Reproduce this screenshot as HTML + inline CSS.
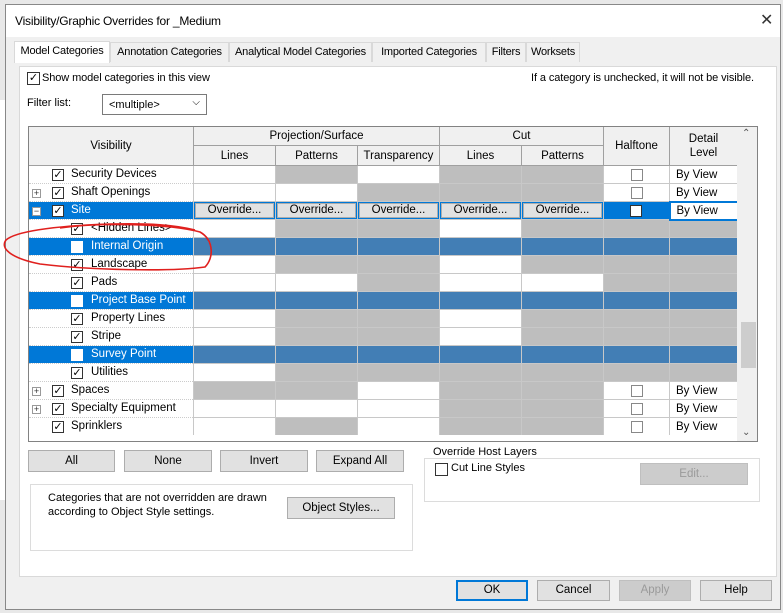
<!DOCTYPE html>
<html><head><meta charset="utf-8"><style>
*{box-sizing:border-box;margin:0;padding:0}
body{width:783px;height:613px;overflow:hidden;background:#e8e8e8;font-family:"Liberation Sans",sans-serif;font-size:11px;color:#000;position:relative}
.a{position:absolute;white-space:nowrap}
#dlg{left:5px;top:4px;width:776px;height:606px;background:#f0f0f0;border:1px solid #888}
#title{left:0;top:0;width:774px;height:32px;background:#fff}
.tab{position:absolute;top:42px;height:20px;border:1px solid #d9d9d9;border-bottom:none;background:#f0f0f0;text-align:center;line-height:19px;font-size:11px;white-space:nowrap;letter-spacing:-0.2px}
#panel{left:13px;top:61px;width:758px;height:511px;background:#fff;border:1px solid #d9d9d9}
table{border-collapse:collapse;table-layout:fixed;position:absolute;left:28px;top:126px;width:709px;font-size:11.5px}
td,th{height:18px;border:1px solid #c8c8c8;padding:0;font-weight:normal;white-space:nowrap;overflow:hidden}
th{background:#f0f0f0;border-color:#a0a0a0;text-align:center}
td.v{border-top:none;border-bottom:1px dotted #ccc;position:relative}
.h{background:repeating-conic-gradient(#8a8a8a 0 25%,#f2f2f2 0 50%) 0 0/2px 2px}
tr.b td{background:#0078d7;color:#fff}
tr.b td.h{background:repeating-conic-gradient(#1a5f9e 0 25%,#6a9ccc 0 50%) 0 0/2px 2px}
.cb{position:absolute;top:3px;width:12px;height:12px;border:1px solid #333;background:#fff;font-size:11px;line-height:10px;text-align:center;color:#000}
.lb{position:absolute;top:2px}
.ex{position:absolute;left:3px;top:5px;width:9px;height:9px;border:1px solid #999;background:#fff;font-size:9px;line-height:7px;text-align:center;color:#333}
.hc{display:block;margin:0 auto;width:12px;height:12px;border:1px solid #888;background:#fff}
.bv{padding-left:6px;padding-top:1px}
.ov{display:block;margin:0 1px;height:15px;background:#e1e1e1;border:1px solid #adadad;text-align:center;color:#000;line-height:13px}
.btn{position:absolute;background:#e1e1e1;border:1px solid #adadad;text-align:center;font-size:11.5px}
.dis{color:#9a9a9a;background:#cccccc;border-color:#bfbfbf}
.grp{position:absolute;border:1px solid #dcdcdc}
</style></head><body>
<div class="a" style="left:0;top:100px;width:5px;height:400px;background:#fff"></div>
<div id="dlg" class="a">
<div id="title" class="a"></div>
<div class="a" style="left:9px;top:9px;font-size:12px;letter-spacing:-0.2px">Visibility/Graphic Overrides for _Medium</div>
<div class="a" style="left:754px;top:5px;font-size:16px;color:#333;font-weight:lighter">✕</div>
<div id="panel" class="a"></div>
</div>
<div class="tab" style="left:14px;width:96px;background:#fff;top:41px;height:22px">Model Categories</div>
<div class="tab" style="left:110px;width:119px">Annotation Categories</div>
<div class="tab" style="left:229px;width:143px">Analytical Model Categories</div>
<div class="tab" style="left:372px;width:114px">Imported Categories</div>
<div class="tab" style="left:486px;width:40px">Filters</div>
<div class="tab" style="left:526px;width:54px">Worksets</div>
<div class="a" style="left:27px;top:72px;width:13px;height:13px;border:1px solid #333;font-size:11px;line-height:11px;text-align:center">✓</div>
<div class="a" style="left:42px;top:72px;letter-spacing:-0.1px">Show model categories in this view</div>
<div class="a" style="left:531px;top:72px;letter-spacing:-0.1px">If a category is unchecked, it will not be visible.</div>
<div class="a" style="left:27px;top:97px">Filter list:</div>
<div class="a" style="left:102px;top:94px;width:105px;height:21px;border:1px solid #7a7a7a;background:#fff;padding:4px 6px">&lt;multiple&gt;<span style="position:absolute;right:6px;top:2px;font-size:10px">⌵</span></div>

<table>
<colgroup><col style="width:165px"><col style="width:82px"><col style="width:82px"><col style="width:82px"><col style="width:82px"><col style="width:82px"><col style="width:66px"><col style="width:68px"></colgroup>
<tr><th rowspan="2" style="height:39px">Visibility</th><th colspan="3" style="height:19px">Projection/Surface</th><th colspan="2">Cut</th><th rowspan="2">Halftone</th><th rowspan="2" style="line-height:14px">Detail<br>Level</th></tr>
<tr><th style="height:20px">Lines</th><th>Patterns</th><th>Transparency</th><th>Lines</th><th>Patterns</th></tr>
<tr><td class="v"><span class="cb" style="left:23px">✓</span><span class="lb" style="left:42px">Security Devices</span></td><td></td><td class="h"></td><td></td><td class="h"></td><td class="h"></td><td><span class="hc"></span></td><td class="bv">By View</td></tr>
<tr><td class="v"><span class="ex">+</span><span class="cb" style="left:23px">✓</span><span class="lb" style="left:42px">Shaft Openings</span></td><td></td><td></td><td class="h"></td><td class="h"></td><td class="h"></td><td><span class="hc"></span></td><td class="bv">By View</td></tr>
<tr class="b"><td class="v"><span class="ex">−</span><span class="cb" style="left:23px">✓</span><span class="lb" style="left:42px">Site</span></td><td><span class="ov">Override...</span></td><td><span class="ov">Override...</span></td><td><span class="ov">Override...</span></td><td><span class="ov">Override...</span></td><td><span class="ov">Override...</span></td><td><span class="hc" style="border-color:#333"></span></td><td style="background:#fff;color:#000;border:2px solid #0078d7" class="bv">By View</td></tr>
<tr><td class="v"><span class="cb" style="left:42px">✓</span><span class="lb" style="left:62px">&lt;Hidden Lines&gt;</span></td><td></td><td class="h"></td><td class="h"></td><td></td><td class="h"></td><td class="h"></td><td class="h"></td></tr>
<tr class="b"><td class="v"><span class="cb" style="left:42px;border-color:#fff"></span><span class="lb" style="left:62px">Internal Origin</span></td><td class="h"></td><td class="h"></td><td class="h"></td><td class="h"></td><td class="h"></td><td class="h"></td><td class="h"></td></tr>
<tr><td class="v"><span class="cb" style="left:42px">✓</span><span class="lb" style="left:62px">Landscape</span></td><td></td><td class="h"></td><td class="h"></td><td></td><td class="h"></td><td class="h"></td><td class="h"></td></tr>
<tr><td class="v"><span class="cb" style="left:42px">✓</span><span class="lb" style="left:62px">Pads</span></td><td></td><td></td><td class="h"></td><td></td><td></td><td class="h"></td><td class="h"></td></tr>
<tr class="b"><td class="v"><span class="cb" style="left:42px;border-color:#fff"></span><span class="lb" style="left:62px">Project Base Point</span></td><td class="h"></td><td class="h"></td><td class="h"></td><td class="h"></td><td class="h"></td><td class="h"></td><td class="h"></td></tr>
<tr><td class="v"><span class="cb" style="left:42px">✓</span><span class="lb" style="left:62px">Property Lines</span></td><td></td><td class="h"></td><td class="h"></td><td></td><td class="h"></td><td class="h"></td><td class="h"></td></tr>
<tr><td class="v"><span class="cb" style="left:42px">✓</span><span class="lb" style="left:62px">Stripe</span></td><td></td><td class="h"></td><td class="h"></td><td></td><td class="h"></td><td class="h"></td><td class="h"></td></tr>
<tr class="b"><td class="v"><span class="cb" style="left:42px;border-color:#fff"></span><span class="lb" style="left:62px">Survey Point</span></td><td class="h"></td><td class="h"></td><td class="h"></td><td class="h"></td><td class="h"></td><td class="h"></td><td class="h"></td></tr>
<tr><td class="v"><span class="cb" style="left:42px">✓</span><span class="lb" style="left:62px">Utilities</span></td><td></td><td class="h"></td><td class="h"></td><td class="h"></td><td class="h"></td><td class="h"></td><td class="h"></td></tr>
<tr><td class="v"><span class="ex">+</span><span class="cb" style="left:23px">✓</span><span class="lb" style="left:42px">Spaces</span></td><td class="h"></td><td class="h"></td><td></td><td class="h"></td><td class="h"></td><td><span class="hc"></span></td><td class="bv">By View</td></tr>
<tr><td class="v"><span class="ex">+</span><span class="cb" style="left:23px">✓</span><span class="lb" style="left:42px">Specialty Equipment</span></td><td></td><td></td><td></td><td class="h"></td><td class="h"></td><td><span class="hc"></span></td><td class="bv">By View</td></tr>
<tr><td class="v"><span class="cb" style="left:23px">✓</span><span class="lb" style="left:42px">Sprinklers</span></td><td></td><td class="h"></td><td></td><td class="h"></td><td class="h"></td><td><span class="hc"></span></td><td class="bv">By View</td></tr>
</table>
<div class="a" style="left:28px;top:435px;width:709px;height:7px;background:#fff;border-bottom:1px solid #a0a0a0"></div>
<div class="a" style="left:28px;top:126px;width:730px;height:316px;border:1px solid #828282"></div>
<div class="a" style="left:737px;top:127px;width:20px;height:314px;background:#f0f0f0"></div>
<div class="a" style="left:742px;top:128px;font-size:10px;color:#555">⌃</div>
<div class="a" style="left:742px;top:427px;font-size:10px;color:#555">⌄</div>
<div class="a" style="left:741px;top:322px;width:15px;height:46px;background:#cdcdcd"></div>

<div class="btn" style="left:28px;top:450px;width:87px;height:22px;line-height:20px">All</div>
<div class="btn" style="left:124px;top:450px;width:88px;height:22px;line-height:20px">None</div>
<div class="btn" style="left:220px;top:450px;width:88px;height:22px;line-height:20px">Invert</div>
<div class="btn" style="left:316px;top:450px;width:88px;height:22px;line-height:20px">Expand All</div>
<div class="grp" style="left:30px;top:484px;width:383px;height:67px"></div>
<div class="a" style="left:48px;top:491px;line-height:14px;font-size:11px">Categories that are not overridden are drawn<br>according to Object Style settings.</div>
<div class="btn" style="left:287px;top:497px;width:108px;height:22px;line-height:20px">Object Styles...</div>
<div class="grp" style="left:424px;top:458px;width:336px;height:44px"></div>
<div class="a" style="left:431px;top:446px;background:#fff;padding:0 2px;font-size:11px">Override Host Layers</div>
<div class="a" style="left:435px;top:463px;width:13px;height:13px;border:1px solid #333;background:#fff"></div>
<div class="a" style="left:451px;top:462px;font-size:11px">Cut Line Styles</div>
<div class="btn dis" style="left:640px;top:463px;width:108px;height:22px;line-height:20px">Edit...</div>

<div class="btn" style="left:456px;top:580px;width:72px;height:21px;line-height:17px;border:2px solid #0078d7">OK</div>
<div class="btn" style="left:537px;top:580px;width:73px;height:21px;line-height:19px">Cancel</div>
<div class="btn dis" style="left:619px;top:580px;width:72px;height:21px;line-height:19px">Apply</div>
<div class="btn" style="left:700px;top:580px;width:72px;height:21px;line-height:19px">Help</div>

<svg class="a" style="left:0;top:0" width="783" height="613"><path d="M60 228 C100 222 170 224 200 232 C214 240 214 258 205 267 C170 272 90 270 40 264 C10 258 0 248 6 240 C15 232 50 226 110 224 C150 223 175 225 195 230" fill="none" stroke="#e0201e" stroke-width="1.6"/></svg>
</body></html>
